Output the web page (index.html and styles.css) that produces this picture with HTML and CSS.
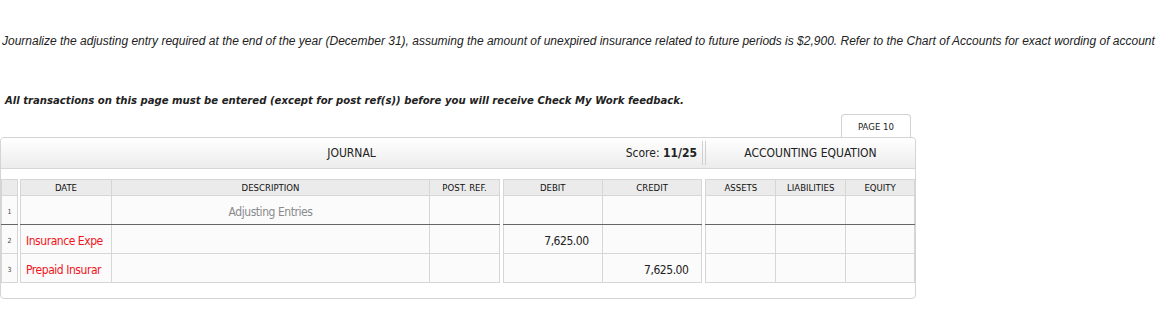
FILE: index.html
```html
<!DOCTYPE html>
<html lang="en">
<head>
  <meta charset="UTF-8" />
  <title>Journal - Page 10</title>
  <link rel="stylesheet" href="styles.css">
</head>
<body>

  <p class="prompt">Journalize the adjusting entry required at the end of the year (December 31), assuming the amount of unexpired insurance related to future periods is $2,900. Refer to the Chart of Accounts for exact wording of account titles.</p>

  <p class="notice">All transactions on this page must be entered (except for post ref(s)) before you will receive Check My Work feedback.</p>

  <div class="tabs">
    <div class="tab">PAGE 10</div>
  </div>

  <div class="panel">
    <div class="panel-head">
      <div class="head-journal">
        <span></span>
        <span class="title">JOURNAL</span>
        <span class="score">Score: <b>11/25</b></span>
      </div>
      <div class="head-sep"></div>
      <div class="head-eq">ACCOUNTING EQUATION</div>
    </div>

    <div class="sheet">
      <table class="grp rownum">
        <tr><th></th></tr>
        <tr class="first"><td>1</td></tr>
        <tr><td>2</td></tr>
        <tr><td>3</td></tr>
      </table>

      <table class="grp entry">
        <tr><th class="c-date">DATE</th><th class="c-desc">DESCRIPTION</th><th class="c-ref">POST. REF.</th></tr>
        <tr class="first"><td></td><td class="memo">Adjusting Entries</td><td></td></tr>
        <tr><td class="bad">Insurance Expe</td><td></td><td></td></tr>
        <tr><td class="bad">Prepaid Insurar</td><td></td><td></td></tr>
      </table>

      <table class="grp amounts">
        <tr><th class="c-amt">DEBIT</th><th class="c-amt2">CREDIT</th></tr>
        <tr class="first"><td></td><td></td></tr>
        <tr><td class="num">7,625.00</td><td></td></tr>
        <tr><td></td><td class="num">7,625.00</td></tr>
      </table>

      <table class="grp equation">
        <tr><th class="c-eq">ASSETS</th><th class="c-eq">LIABILITIES</th><th class="c-eq2">EQUITY</th></tr>
        <tr class="first"><td></td><td></td><td></td></tr>
        <tr><td></td><td></td><td></td></tr>
        <tr><td></td><td></td><td></td></tr>
      </table>
    </div>
  </div>

</body>
</html>
```

FILE: styles.css
```css
body { margin:0; font-family:"Liberation Sans", Arial, sans-serif; color:#222; overflow:hidden; }
.prompt { margin:34px 0 0 2px; font-size:12px; font-style:italic; white-space:nowrap; }
.notice { margin:47px 0 0 5px; font-family:"DejaVu Sans", Verdana, sans-serif; font-size:10.1px; font-weight:bold; font-style:italic; white-space:nowrap; }

.tabs { display:flex; justify-content:flex-end; width:911px; margin-top:8px; }
.tab { width:68px; height:22px; line-height:23px; text-align:center; font-family:"DejaVu Sans Condensed", "DejaVu Sans", sans-serif; font-size:9.5px; border:1px solid #d2d2d2; border-bottom:none; border-radius:4px 4px 0 0; background:#fff; }

.panel { width:914px; height:160px; border:1px solid #d4d4d4; border-radius:4px; font-family:"DejaVu Sans Condensed", "DejaVu Sans", sans-serif; }
.panel-head { display:flex; height:30px; background:linear-gradient(#fff, #ececec); border-bottom:1px solid #d6d6d6; border-radius:4px 4px 0 0; font-size:12px; }
.head-journal { width:701px; display:grid; grid-template-columns:1fr auto 1fr; align-items:center; }
.head-journal .score { justify-self:end; padding-right:5px; }
.head-sep { width:2px; height:24px; align-self:center; border-left:1px solid #d0d0d0; border-right:1px solid #d0d0d0; }
.head-eq { flex:1; display:flex; align-items:center; justify-content:center; }

.sheet { display:flex; gap:3px; margin-top:10px; }
.sheet .rownum { margin-right:-1px; }
table { border-collapse:collapse; table-layout:fixed; }
th, td { border:1px solid #d6d6d6; padding:0; }
th { height:15px; background:#ebebeb; font-size:9.5px; font-weight:normal; color:#111; }
td { height:25px; padding-top:3px; background:#fbfbfb; font-size:12px; letter-spacing:-0.45px; overflow:hidden; }
tr.first td { border-bottom:1px solid #666; }

.rownum th, .rownum td { width:15px; }
.rownum td { font-size:7px; letter-spacing:0; text-align:center; color:#444; }
.c-date { width:90px; }
.c-desc { width:318px; }
.c-ref { width:69px; }
.c-amt { width:98px; }
.c-amt2 { width:99px; }
.c-eq { width:69px; }
.c-eq2 { width:68px; }

.memo { text-align:center; color:#8a8a8a; }
.bad { color:#f0141a; padding-left:5px; white-space:nowrap; }
.num { text-align:right; padding-right:13px; }
```
